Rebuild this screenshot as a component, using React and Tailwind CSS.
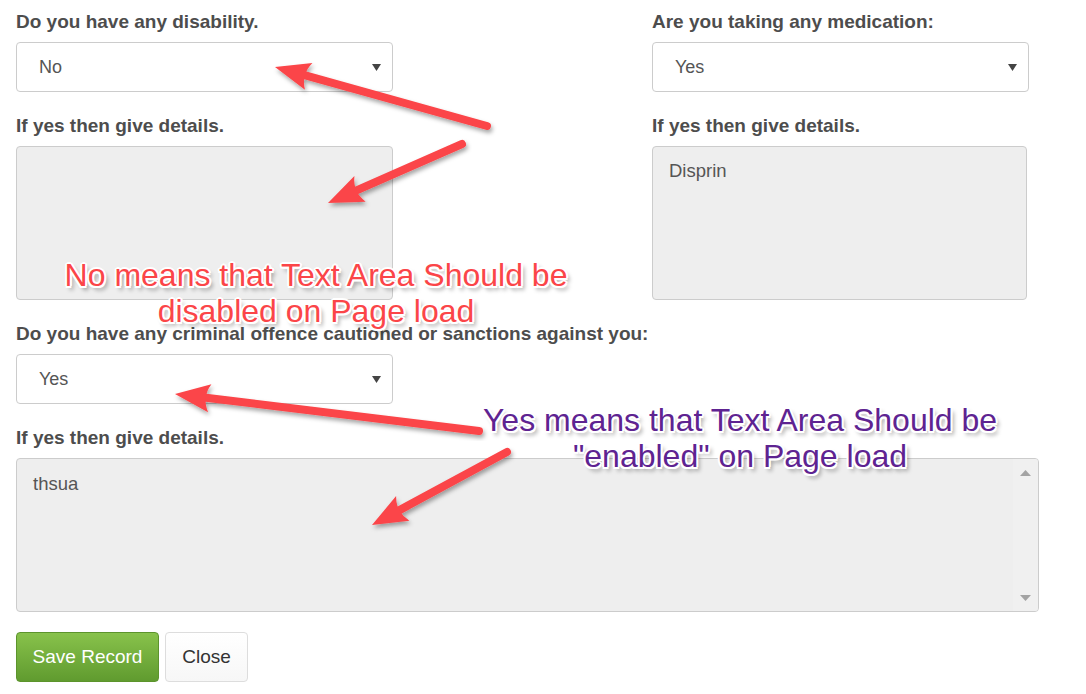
import React from "react";

const font = "font-['Liberation_Sans',Arial,sans-serif]";

function Caret() {
  return (
    <svg width="9" height="7" viewBox="0 0 9 7" className="shrink-0">
      <path d="M0 0 L9 0 L4.5 7 Z" fill="#444" />
    </svg>
  );
}

function Select({ value }) {
  return (
    <div className="flex h-[50px] w-[377px] items-center justify-between rounded-[4px] border border-[#cccccc] bg-white pl-[22px] pr-[11px] text-[18px] leading-[20px] text-[#555555]">
      <span>{value}</span>
      <Caret />
    </div>
  );
}

function Label({ children }) {
  return (
    <div className="mb-[10px] h-[20px] whitespace-nowrap text-[19px] font-bold leading-[20px] text-[#4d4d4d]">
      {children}
    </div>
  );
}

function TextBox({ text, className }) {
  return (
    <div
      className={
        "h-[154px] rounded-[4px] border border-[#cccccc] bg-[#eeeeee] px-[16px] pt-[14px] text-[18.5px] leading-[20px] text-[#555555] " +
        className
      }
    >
      {text}
    </div>
  );
}

function arrowShape(tx, ty, hx, hy, L = 31, W = 14) {
  const dx = hx - tx;
  const dy = hy - ty;
  const len = Math.sqrt(dx * dx + dy * dy);
  const ux = dx / len;
  const uy = dy / len;
  const nx = -uy;
  const ny = ux;
  const bx = hx - ux * L;
  const by = hy - uy * L;
  const c1 = [bx + nx * W - ux * 4, by + ny * W - uy * 4];
  const c2 = [bx - nx * W - ux * 4, by - ny * W - uy * 4];
  const head = `M${hx} ${hy} L${c1[0]} ${c1[1]} Q${bx + ux * 4} ${by + uy * 4} ${c2[0]} ${c2[1]} Z`;
  const line = { x1: tx, y1: ty, x2: bx + ux * 6, y2: by + uy * 6 };
  return { head, line };
}

const arrows = [
  [487, 126, 275, 67],
  [462, 144, 328, 203],
  [479, 431, 175, 394],
  [507, 452, 372, 525],
];

function Arrows() {
  return (
    <svg
      className="pointer-events-none absolute left-0 top-0"
      width="1086"
      height="694"
      viewBox="0 0 1086 694"
    >
      <defs>
        <filter id="sh" x="-20%" y="-20%" width="140%" height="140%">
          <feDropShadow dx="1.5" dy="3" stdDeviation="2" floodColor="#000" floodOpacity="0.35" />
        </filter>
      </defs>
      {arrows.map((a, i) => {
        const s = arrowShape(a[0], a[1], a[2], a[3]);
        return (
          <g key={i} filter="url(#sh)">
            <line
              {...s.line}
              stroke="#fb4548"
              strokeWidth="8"
              strokeLinecap="round"
            />
            <path d={s.head} fill="#fb4548" />
          </g>
        );
      })}
    </svg>
  );
}

const outline =
  "[text-shadow:2px_0_0_#fff,-2px_0_0_#fff,0_2px_0_#fff,0_-2px_0_#fff,1.5px_1.5px_0_#fff,-1.5px_1.5px_0_#fff,1.5px_-1.5px_0_#fff,-1.5px_-1.5px_0_#fff,3px_4px_4px_rgba(0,0,0,0.4)]";

export default function App() {
  return (
    <div className={"relative h-[694px] w-[1086px] overflow-hidden bg-white " + font}>
      <div className="pl-[16px] pt-[12px]">
        <div className="flex">
          <div className="w-[636px]">
            <Label>Do you have any disability.</Label>
            <Select value="No" />
            <div className="mt-[24px]">
              <Label>If yes then give details.</Label>
              <TextBox text="" className="w-[377px]" />
            </div>
          </div>
          <div className="w-[377px]">
            <Label>Are you taking any medication:</Label>
            <Select value="Yes" />
            <div className="mt-[24px]">
              <Label>If yes then give details.</Label>
              <TextBox text="Disprin" className="w-[375px]" />
            </div>
          </div>
        </div>

        <div className="mt-[24px]">
          <Label>Do you have any criminal offence cautioned or sanctions against you:</Label>
          <Select value="Yes" />
        </div>

        <div className="mt-[24px]">
          <Label>If yes then give details.</Label>
          <div className="flex h-[154px] w-[1023px] overflow-hidden rounded-[4px] border border-[#cccccc] bg-[#eeeeee]">
            <div className="flex-1 px-[16px] pt-[15px] text-[18.5px] leading-[20px] text-[#555555]">thsua</div>
            <div className="flex w-[25px] flex-col items-center justify-between bg-[#f0f0f0] pb-[10px] pt-[11px]">
              <svg width="11" height="6" viewBox="0 0 11 6">
                <path d="M0 6 L5.5 0 L11 6 Z" fill="#a3a3a3" />
              </svg>
              <svg width="11" height="6" viewBox="0 0 11 6">
                <path d="M0 0 L11 0 L5.5 6 Z" fill="#a3a3a3" />
              </svg>
            </div>
          </div>
        </div>

        <div className="mt-[20px] flex gap-[6px]">
          <div className="flex h-[50px] w-[143px] items-center justify-center rounded-[4px] border border-[#5c942c] bg-gradient-to-b from-[#88c24b] to-[#609b2f] text-[19px] text-white">
            Save Record
          </div>
          <div className="flex h-[50px] w-[83px] items-center justify-center rounded-[4px] border border-[#dddddd] bg-gradient-to-b from-white to-[#f7f7f7] text-[19px] text-[#333333]">
            Close
          </div>
        </div>
      </div>

      <Arrows />

      <div
        className={
          "absolute left-[16px] top-[257px] w-[600px] text-center text-[32px] leading-[36px] text-[#fb4548] " +
          outline
        }
      >
        No means that Text Area Should be
        <br />
        disabled on Page load
      </div>

      <div
        className={
          "absolute left-[440px] top-[402px] w-[600px] text-center text-[32px] leading-[36px] text-[#5e2391] " +
          outline
        }
      >
        Yes means that Text Area Should be
        <br />
        "enabled" on Page load
      </div>
    </div>
  );
}
